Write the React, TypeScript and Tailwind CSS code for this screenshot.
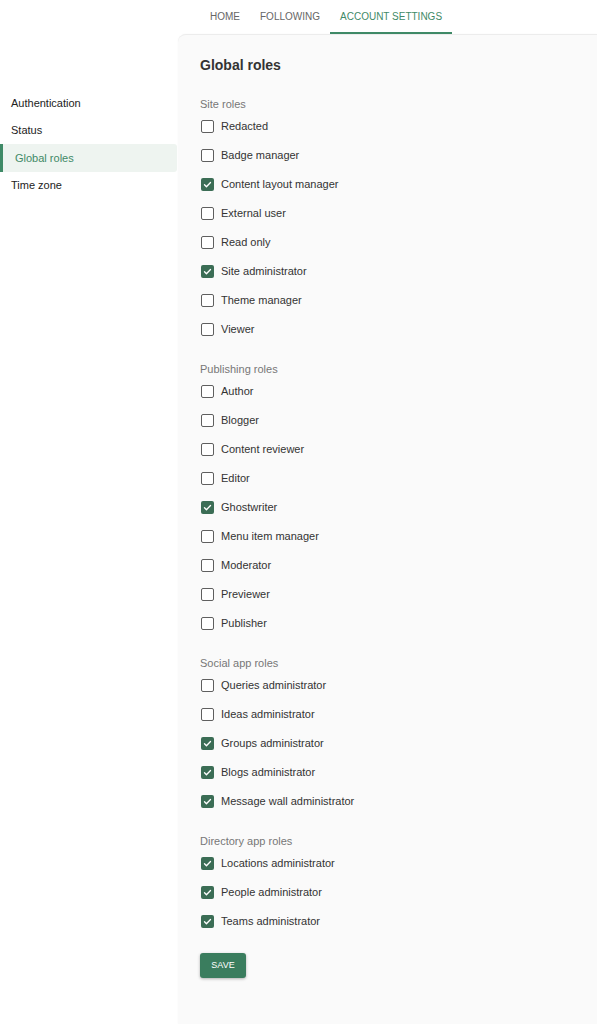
import { useState } from 'react';

type Role = { label: string; checked: boolean };

const sections: { title: string; roles: Role[] }[] = [
    {
        title: "Site roles",
        roles: [
            { label: "Redacted", checked: false },
            { label: "Badge manager", checked: false },
            { label: "Content layout manager", checked: true },
            { label: "External user", checked: false },
            { label: "Read only", checked: false },
            { label: "Site administrator", checked: true },
            { label: "Theme manager", checked: false },
            { label: "Viewer", checked: false },
        ],
    },
    {
        title: "Publishing roles",
        roles: [
            { label: "Author", checked: false },
            { label: "Blogger", checked: false },
            { label: "Content reviewer", checked: false },
            { label: "Editor", checked: false },
            { label: "Ghostwriter", checked: true },
            { label: "Menu item manager", checked: false },
            { label: "Moderator", checked: false },
            { label: "Previewer", checked: false },
            { label: "Publisher", checked: false },
        ],
    },
    {
        title: "Social app roles",
        roles: [
            { label: "Queries administrator", checked: false },
            { label: "Ideas administrator", checked: false },
            { label: "Groups administrator", checked: true },
            { label: "Blogs administrator", checked: true },
            { label: "Message wall administrator", checked: true },
        ],
    },
    {
        title: "Directory app roles",
        roles: [
            { label: "Locations administrator", checked: true },
            { label: "People administrator", checked: true },
            { label: "Teams administrator", checked: true },
        ],
    },
];

const tabs = ["HOME", "FOLLOWING", "ACCOUNT SETTINGS"];
const navItems = ["Authentication", "Status", "Global roles", "Time zone"];

const Checkbox = ({ checked, onChange }: { checked: boolean; onChange: () => void }) => (
    <button
        type="button"
        onClick={onChange}
        className={`w-[13px] h-[13px] rounded-[2px] flex items-center justify-center shrink-0 ${
            checked ? "bg-[#3b6d55]" : "border-[1.5px] border-[#5f5f5f] bg-white"
        }`}
    >
        {checked && (
            <svg width="9" height="9" viewBox="0 0 12 12" fill="none">
                <path d="M2 6.3l2.6 2.6L10 3.4" stroke="white" strokeWidth="1.8" strokeLinecap="round" strokeLinejoin="round" />
            </svg>
        )}
    </button>
);

export default function App() {
    const [state, setState] = useState(sections.map(s => s.roles.map(r => r.checked)));

    const toggle = (si: number, ri: number) => {
        setState(prev => prev.map((row, i) => (i === si ? row.map((v, j) => (j === ri ? !v : v)) : row)));
    };

    return (
        <div className="min-h-[1024px] bg-white font-['Liberation_Sans',Arial,sans-serif] text-[#333]">
            {/* tab bar */}
            <div className="flex h-[34px]">
                <div className="w-[178px] shrink-0" />
                <nav className="flex pl-[22px]">
                    {tabs.map(tab => {
                        const active = tab === "ACCOUNT SETTINGS";
                        return (
                            <div
                                key={tab}
                                className={`px-[10px] flex items-center text-[10px] border-b-2 ${
                                    active ? "text-[#3f8a67] border-[#3f8a67]" : "text-[#666] border-transparent"
                                }`}
                            >
                                {tab}
                            </div>
                        );
                    })}
                </nav>
            </div>

            <div className="flex">
                {/* side nav */}
                <aside className="w-[178px] shrink-0 pt-[55px]">
                    {navItems.map(item => {
                        const active = item === "Global roles";
                        return (
                            <div
                                key={item}
                                className={`h-[27.5px] flex items-center text-[11px] ${
                                    active
                                        ? "bg-[#eef4f0] border-l-[3px] border-[#3f8a67] pl-[12px] text-[#3f8a67] rounded-r-[3px] mr-px"
                                        : "pl-[11px] text-[#222]"
                                }`}
                            >
                                {item}
                            </div>
                        );
                    })}
                </aside>

                {/* main panel */}
                <main className="flex-1 min-h-[990px] bg-[#fafafa] rounded-tl-[8px] border-t border-[#ececec] shadow-[0_0_2px_rgba(0,0,0,0.04)] pl-[22px] pt-[20px] pb-[40px]">
                    <h2 className="text-[14px] leading-5 font-bold text-[#333]">Global roles</h2>

                    {sections.map((section, si) => (
                        <section key={section.title} className={si === 0 ? "mt-[21px]" : "mt-[17px]"}>
                            <div className="h-4 leading-4 text-[11px] text-[#777]">{section.title}</div>
                            {section.roles.map((role, ri) => (
                                <label key={role.label} className="h-[29px] flex items-center gap-[7px] text-[11px] text-[#333] pl-px">
                                    <Checkbox checked={state[si][ri]} onChange={() => toggle(si, ri)} />
                                    <span>{role.label}</span>
                                </label>
                            ))}
                        </section>
                    ))}

                    <button
                        type="button"
                        className="mt-[17px] h-[25px] w-[46px] rounded-[3px] bg-[#3a7d5e] text-white text-[9px] shadow-[0_1px_3px_rgba(0,0,0,0.3)]"
                    >
                        SAVE
                    </button>
                </main>
            </div>
        </div>
    );
}
